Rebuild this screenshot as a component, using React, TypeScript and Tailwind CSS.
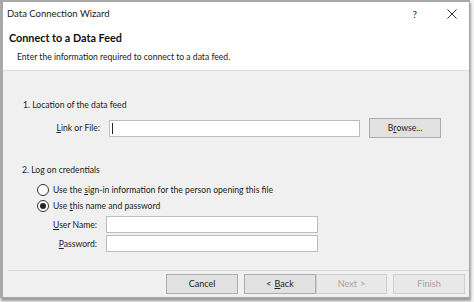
import React from "react";

const font = { fontFamily: 'Lato, "Noto Sans", sans-serif' };

function U({ children }: { children: React.ReactNode }) {
    return <span className="underline underline-offset-1">{children}</span>;
}

function Radio({ checked }: { checked?: boolean }) {
    return (
        <span className="w-[12px] h-[12px] rounded-full border border-[#333] bg-white flex items-center justify-center shrink-0">
            {checked && <span className="w-[6px] h-[6px] rounded-full bg-[#222]" />}
        </span>
    );
}

function Btn({ children, disabled, w }: { children: React.ReactNode; disabled?: boolean; w: string }) {
    return (
        <div
            className={`${w} h-[20px] flex items-center justify-center text-[9px] border ${
                disabled ? "border-[#cfcfcf] bg-[#e8e8e8] text-[#a3a3a3]" : "border-[#adadad] bg-[#e1e1e1] text-[#222]"
            }`}
        >
            {children}
        </div>
    );
}

export default function App() {
    return (
        <div className="w-[474px] h-[302px] bg-[#f3f3f3] overflow-hidden" style={font}>
            <div className="w-[470px] h-[298px] border-t-2 border-l-[3px] border-r border-b border-[#a8a8a8] bg-[#f0f0f0] flex flex-col shadow-[1px_3px_2px_rgba(0,0,0,0.35)]">
                {/* title + header */}
                <div className="bg-white h-[69px] border-b border-[#dcdcdc] shrink-0">
                    <div className="h-[24px] flex items-center pl-[4px] pr-[10px] text-[9.5px] text-[#222]">
                        <span>Data Connection Wizard</span>
                        <span className="ml-auto mr-[30px] text-[10px]">?</span>
                        <svg width="10" height="10" viewBox="0 0 10 10" className="mr-[2px]">
                            <path d="M0.5 0.5 L9.5 9.5 M9.5 0.5 L0.5 9.5" stroke="#333" strokeWidth="1" />
                        </svg>
                    </div>
                    <div className="pl-[6px] pt-[4px] text-[10.8px] font-bold text-[#111] leading-[16px]">Connect to a Data Feed</div>
                    <div className="pl-[14px] pt-[4px] text-[8.6px] text-[#222] leading-[14px]">
                        Enter the information required to connect to a data feed.
                    </div>
                </div>

                {/* body */}
                <div className="flex-1 text-[8.6px] text-[#222] leading-[14px]">
                    <div className="pl-[20px] pt-[27px]">1. Location of the data feed</div>
                    <div className="flex items-center mt-[6px]">
                        <div className="w-[106px] text-right pr-[9px]">
                            <U>L</U>ink or File:
                        </div>
                        <div className="w-[251px] h-[17px] bg-white border border-[#bdbdbd] flex items-center pl-[2px]">
                            <span className="w-px h-[11px] bg-[#222]" />
                        </div>
                        <div className="ml-[9px] w-[72px] h-[20px] flex items-center justify-center border border-[#adadad] bg-[#e1e1e1]">
                            B<U>r</U>owse...
                        </div>
                    </div>

                    <div className="pl-[19px] pt-[25px]">2. Log on credentials</div>
                    <div className="pl-[34px] mt-[5px] flex items-center gap-[4px] h-[16px]">
                        <Radio />
                        <span>
                            Use the <U>s</U>ign-in information for the person opening this file
                        </span>
                    </div>
                    <div className="pl-[34px] flex items-center gap-[4px] h-[16px]">
                        <Radio checked />
                        <span>
                            Use <U>t</U>his name and password
                        </span>
                    </div>
                    <div className="flex items-center mt-[2px]">
                        <div className="w-[103px] text-right pr-[9px]">
                            <U>U</U>ser Name:
                        </div>
                        <div className="w-[212px] h-[17px] bg-white border border-[#bdbdbd]" />
                    </div>
                    <div className="flex items-center mt-[2px]">
                        <div className="w-[103px] text-right pr-[9px]">
                            <U>P</U>assword:
                        </div>
                        <div className="w-[212px] h-[17px] bg-white border border-[#bdbdbd]" />
                    </div>
                </div>

                {/* footer */}
                <div className="h-[27px] shrink-0 ml-[5px] border-t border-[#dadada] flex items-start pt-[3px]">
                    <div className="ml-[158px] flex">
                        <Btn w="w-[72px]">Cancel</Btn>
                        <div className="ml-[6px] flex">
                            <Btn w="w-[72px]">
                                <span className="mr-[3px]">&lt;</span>
                                <U>B</U>ack
                            </Btn>
                            <Btn w="w-[71px]" disabled>
                                Next<span className="ml-[3px]">&gt;</span>
                            </Btn>
                        </div>
                        <div className="ml-[6px]">
                            <Btn w="w-[72px]" disabled>
                                Finish
                            </Btn>
                        </div>
                    </div>
                </div>
            </div>
        </div>
    );
}
